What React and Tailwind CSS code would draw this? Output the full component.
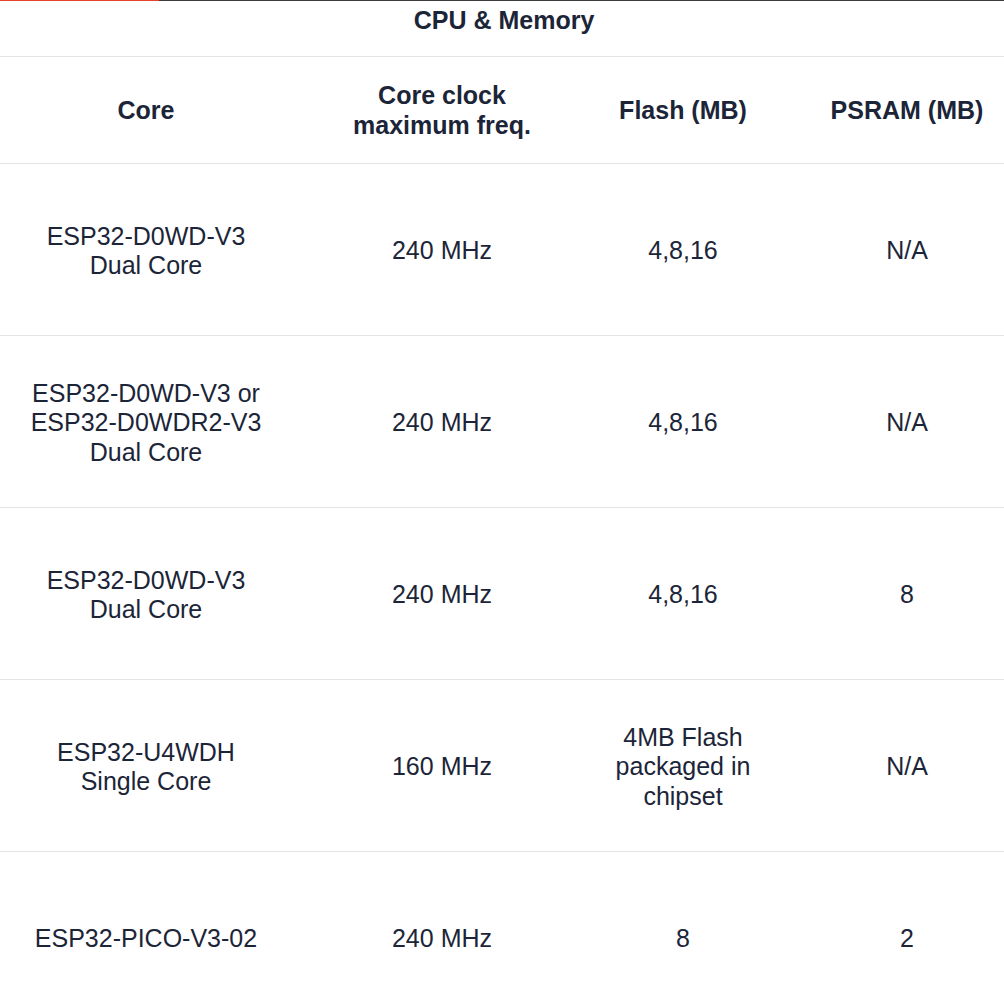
const rows = [
  { core: ["ESP32-D0WD-V3", "Dual Core"], clock: "240 MHz", flash: ["4,8,16"], psram: "N/A" },
  { core: ["ESP32-D0WD-V3 or", "ESP32-D0WDR2-V3", "Dual Core"], clock: "240 MHz", flash: ["4,8,16"], psram: "N/A" },
  { core: ["ESP32-D0WD-V3", "Dual Core"], clock: "240 MHz", flash: ["4,8,16"], psram: "8" },
  { core: ["ESP32-U4WDH", "Single Core"], clock: "160 MHz", flash: ["4MB Flash", "packaged in", "chipset"], psram: "N/A" },
  { core: ["ESP32-PICO-V3-02"], clock: "240 MHz", flash: ["8"], psram: "2" },
];

function Lines({ items }) {
  return items.map((t, i) => (
    <span key={i} className="block">
      {t}
    </span>
  ));
}

export default function App() {
  return (
    <div className="w-[1004px] h-[1000px] overflow-hidden bg-white text-[#1c2538] font-[family-name:'Liberation_Sans',Arial,sans-serif]">
      <div className="flex h-[1px]">
        <div className="w-[159px] bg-[#e8412a]"></div>
        <div className="flex-1 bg-[#3b3b3b]"></div>
      </div>
      <div className="w-[1040px]">
        <div className="h-[56px] pt-[4px] border-b border-[#e3e3e3] text-center text-[25px] leading-[30px] font-bold pr-[32px]">
          CPU &amp; Memory
        </div>
        <div className="grid grid-cols-[292px_300px_182px_266px] h-[107px] items-center text-center text-[25px] leading-[30px] font-bold border-b border-[#e3e3e3]">
          <div>Core</div>
          <div>
            <Lines items={["Core clock", "maximum freq."]} />
          </div>
          <div>Flash (MB)</div>
          <div>PSRAM (MB)</div>
        </div>
        {rows.map((r, i) => (
          <div
            key={i}
            className="grid grid-cols-[292px_300px_182px_266px] h-[172px] pt-[3px] items-center text-center text-[25px] leading-[29.5px] border-b border-[#e3e3e3]"
          >
            <div>
              <Lines items={r.core} />
            </div>
            <div>{r.clock}</div>
            <div>
              <Lines items={r.flash} />
            </div>
            <div>{r.psram}</div>
          </div>
        ))}
      </div>
    </div>
  );
}
